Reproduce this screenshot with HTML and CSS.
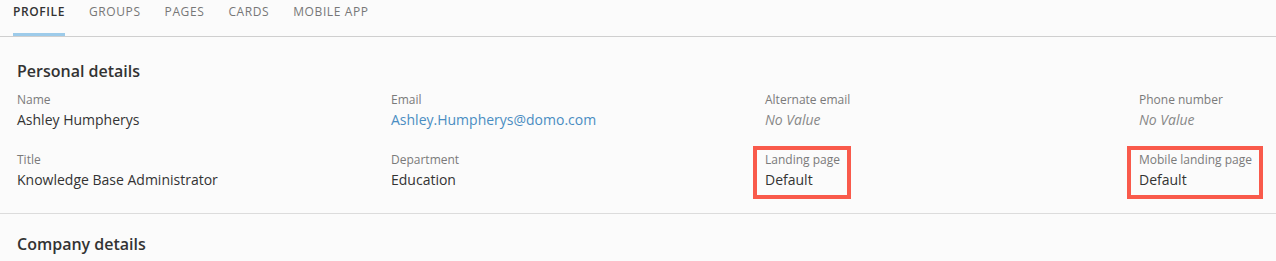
FILE: index.html
```html
<!DOCTYPE html>
<html lang="en">
<head>
<meta charset="utf-8">
<title>Profile</title>
<link rel="stylesheet" href="styles.css">
</head>
<body>
<nav class="tabs">
  <a class="tab tab-active">Profile</a>
  <a class="tab">Groups</a>
  <a class="tab">Pages</a>
  <a class="tab">Cards</a>
  <a class="tab">Mobile App</a>
</nav>
<section class="section section-personal">
  <h2 class="section-title">Personal details</h2>
  <div class="fields">
    <div class="field">
      <div class="field-label">Name</div>
      <div class="field-value">Ashley Humpherys</div>
    </div>
    <div class="field">
      <div class="field-label">Email</div>
      <div class="field-value field-link">Ashley.Humpherys@domo.com</div>
    </div>
    <div class="field">
      <div class="field-label">Alternate email</div>
      <div class="field-value field-empty">No Value</div>
    </div>
    <div class="field">
      <div class="field-label">Phone number</div>
      <div class="field-value field-empty">No Value</div>
    </div>
    <div class="field">
      <div class="field-label">Title</div>
      <div class="field-value">Knowledge Base Administrator</div>
    </div>
    <div class="field">
      <div class="field-label">Department</div>
      <div class="field-value">Education</div>
    </div>
    <div class="field field-highlight">
      <div class="field-label">Landing page</div>
      <div class="field-value">Default</div>
    </div>
    <div class="field field-highlight">
      <div class="field-label">Mobile landing page</div>
      <div class="field-value">Default</div>
    </div>
  </div>
</section>
<section class="section section-company">
  <h2 class="section-title">Company details</h2>
</section>
</body>
</html>
```
FILE: styles.css
```css
html, body {
  margin: 0;
  padding: 0;
}
body {
  background: #fbfbfb;
  font-family: "Open Sans", "Liberation Sans", sans-serif;
  color: #333;
  overflow: hidden;
}
.tabs {
  display: flex;
  gap: 24px;
  padding: 0 13px;
  height: 36px;
  border-bottom: 1px solid #cfcfcf;
}
.tab {
  display: block;
  font-size: 12px;
  line-height: 24px;
  letter-spacing: 0.6px;
  text-transform: uppercase;
  color: #777;
  padding-bottom: 9px;
  border-bottom: 3px solid transparent;
}
.tab-active {
  color: #333;
  font-weight: 600;
  border-bottom-color: #9dcbea;
}
.section {
  padding: 0 17px;
}
.section-personal {
  padding-bottom: 23px;
  border-bottom: 1px solid #dcdcdc;
}
.section-title {
  margin: 23px 0 0;
  font-size: 16px;
  line-height: 22px;
  font-weight: 600;
  color: #333;
}
.section-company .section-title {
  margin-top: 19px;
}
.fields {
  display: grid;
  grid-template-columns: 374px 374px 374px 1fr;
  row-gap: 22px;
  margin-top: 10px;
}
.field {
  position: relative;
  width: fit-content;
}
.field-label {
  font-size: 12px;
  line-height: 16px;
  color: #7a7a7a;
  margin-bottom: 2px;
  white-space: nowrap;
}
.field-value {
  font-size: 14px;
  line-height: 20px;
  color: #333;
  white-space: nowrap;
}
.field-link {
  color: #4a8dc2;
}
.field-empty {
  font-style: italic;
  color: #888;
}
.field-highlight::after {
  content: "";
  position: absolute;
  top: -6px;
  bottom: -9px;
  left: -12px;
  right: -11px;
  border: 4px solid #f95a4b;
}
```
